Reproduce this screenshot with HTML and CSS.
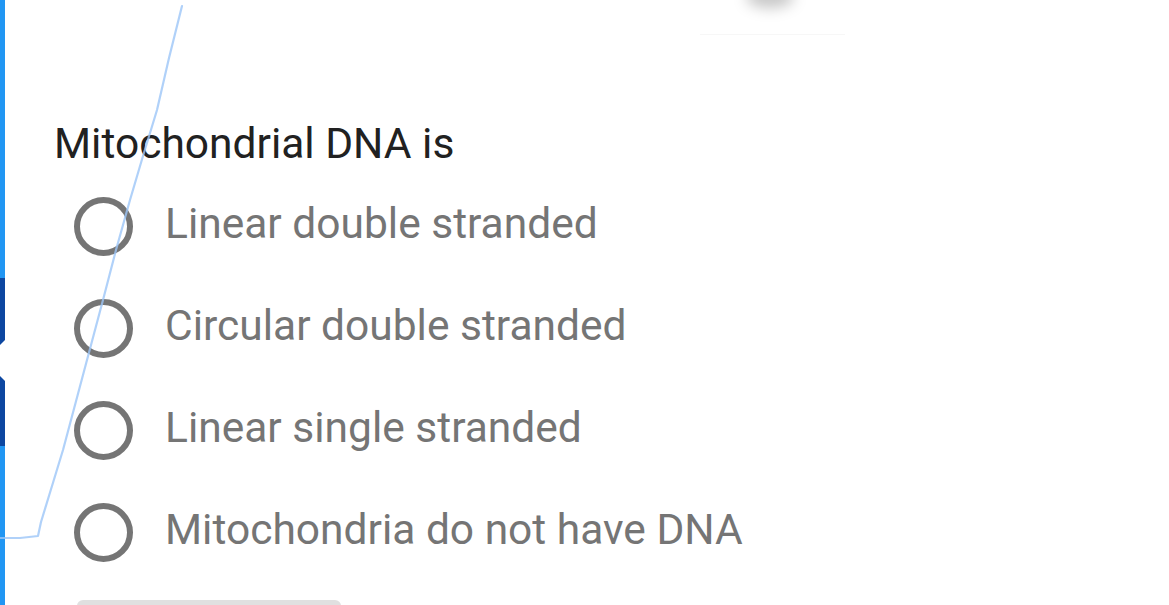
FILE: index.html
```html
<!DOCTYPE html>
<html>
<head>
<meta charset="utf-8">
<link rel="stylesheet" href="styles.css">
</head>
<body>
<div class="page">
  <div class="rail">
    <div class="rail-seg rail-top"></div>
    <div class="rail-seg rail-active"></div>
    <div class="rail-seg rail-bottom"></div>
  </div>
  <main class="content">
    <div class="topbar">
      <div class="fab-shadow"></div>
      <div class="faint-line"></div>
    </div>
    <h2 class="question">Mitochondrial DNA is</h2>
    <ul class="options">
      <li class="option"><span class="radio"></span><span class="label">Linear double stranded</span></li>
      <li class="option"><span class="radio"></span><span class="label">Circular double stranded</span></li>
      <li class="option"><span class="radio"></span><span class="label">Linear single stranded</span></li>
      <li class="option"><span class="radio"></span><span class="label">Mitochondria do not have DNA</span></li>
    </ul>
    <div class="submit"></div>
  </main>
  <svg class="scribble" width="200" height="560" viewBox="0 0 200 560">
    <path d="M182 6 L169 58 L157 110 L143 156 L130 200 L116 250 L103 300 L83 375 L63 450 L52 486 L41 522 L38 536 L20 538 L0 538" fill="none" stroke="#9cc5f7" stroke-width="2.2" stroke-linecap="round" stroke-linejoin="round" opacity="0.8"/>
  </svg>
</div>
</body>
</html>
```

FILE: styles.css
```css
html, body {
  margin: 0;
  padding: 0;
  background: #ffffff;
}
.page {
  position: relative;
  display: flex;
  width: 1169px;
  height: 605px;
  overflow: hidden;
  font-family: Roboto, "Liberation Sans", sans-serif;
}
.rail {
  display: flex;
  flex-direction: column;
  width: 5px;
  flex: none;
}
.rail-seg {
  flex: none;
  background: #2196f3;
}
.rail-top {
  height: 278px;
}
.rail-active {
  position: relative;
  height: 168px;
  background: #0d47a1;
}
.rail-active::after {
  content: "";
  position: absolute;
  left: 0;
  top: 62px;
  width: 5px;
  height: 41px;
  background: #ffffff;
  clip-path: polygon(0 5px, 100% 0, 100% 100%, 0 calc(100% - 5px));
}
.rail-bottom {
  flex: 1;
}
.content {
  flex: 1;
  padding-left: 49px;
  display: flex;
  flex-direction: column;
}
.content > * {
  flex: none;
}
.topbar {
  position: relative;
  height: 114px;
}
.fab-shadow {
  position: absolute;
  left: 692px;
  top: -14px;
  width: 48px;
  height: 22px;
  border-radius: 50%;
  background: rgba(0, 0, 0, 0.22);
  filter: blur(7px);
}
.faint-line {
  position: absolute;
  left: 646px;
  top: 34px;
  width: 145px;
  height: 1px;
  background: #f7f7f7;
}
.question {
  margin: 0;
  font-weight: 400;
  font-size: 42.5px;
  line-height: 60px;
  color: #212121;
}
.options {
  list-style: none;
  margin: 1px 0 0 0;
  padding: 0 0 0 20px;
}
.option {
  display: flex;
  align-items: center;
  height: 102px;
}
.radio {
  box-sizing: border-box;
  width: 59px;
  height: 59px;
  border: 6px solid #757575;
  border-radius: 50%;
  flex: none;
}
.label {
  margin-left: 32px;
  padding-bottom: 5px;
  font-size: 42.5px;
  color: #757575;
}
.submit {
  margin-left: 23px;
  margin-top: 17px;
  width: 264px;
  height: 30px;
  background: #e0e0e0;
  border-radius: 6px;
}
.scribble {
  position: absolute;
  left: 0;
  top: 0;
  pointer-events: none;
}
```
